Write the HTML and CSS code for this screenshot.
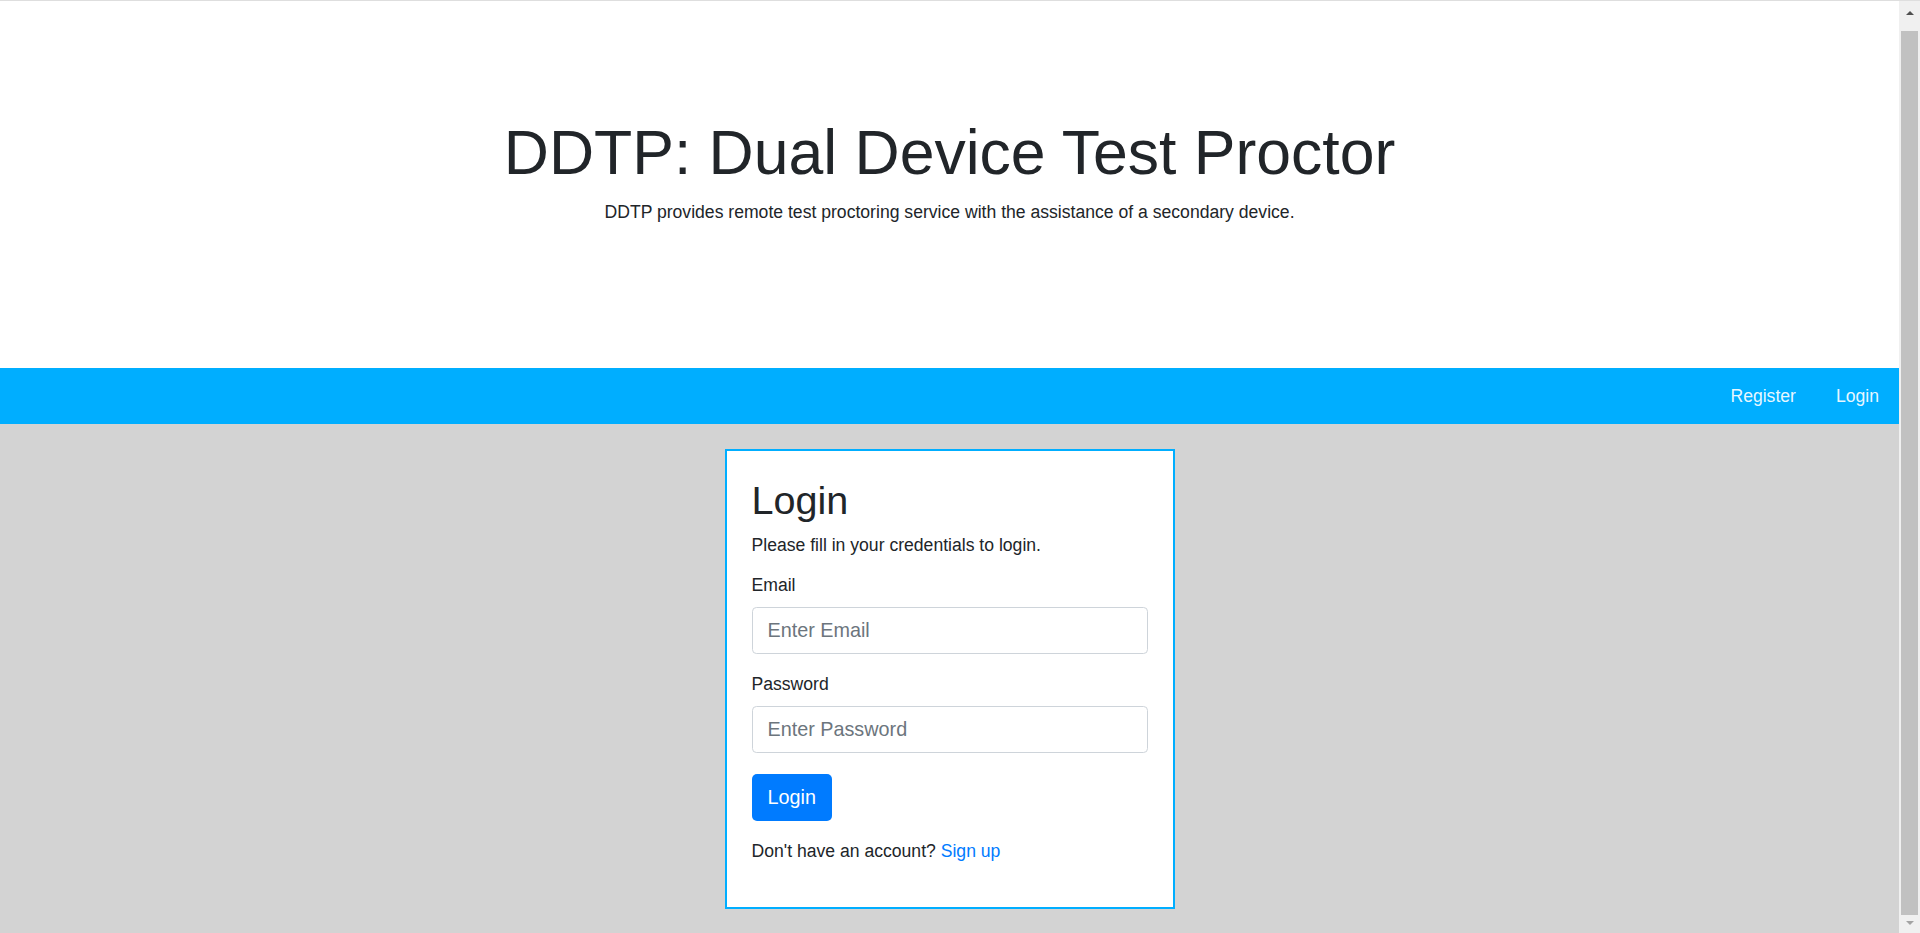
FILE: index.html
```html
<!DOCTYPE html>
<html lang="en">
<head>
  <meta charset="UTF-8">
  <meta name="viewport" content="width=device-width, initial-scale=1.0">
  <title>DDTP: Dual Device Test Proctor</title>
  <link rel="stylesheet" href="styles.css">
</head>
<body>
  <div class="window">
    <div class="viewport">
      <header class="jumbotron">
        <h1 class="display-title">DDTP: Dual Device Test Proctor</h1>
        <p class="lead-text">DDTP provides remote test proctoring service with the assistance of a secondary device.</p>
      </header>

      <nav class="navbar">
        <a class="nav-link" href="#">Register</a>
        <a class="nav-link" href="#">Login</a>
      </nav>

      <main class="page">
        <div class="login-box">
          <h2>Login</h2>
          <p class="intro">Please fill in your credentials to login.</p>
          <form>
            <div class="form-group">
              <label for="email">Email</label>
              <input type="text" id="email" class="form-control" placeholder="Enter Email">
            </div>
            <div class="form-group">
              <label for="password">Password</label>
              <input type="password" id="password" class="form-control" placeholder="Enter Password">
            </div>
            <div class="form-group submit">
              <button type="submit" class="btn">Login</button>
            </div>
            <p class="signup">Don't have an account? <a href="#">Sign up</a></p>
          </form>
        </div>
      </main>
    </div>

    <div class="scrollbar">
      <span class="arrow up"></span>
      <div class="thumb"></div>
      <span class="arrow down"></span>
    </div>
  </div>
</body>
</html>
```

FILE: styles.css
```css
body {
  font-family: 'Liberation Sans', Arial, sans-serif;
  font-size: 17.6px;
  line-height: 1.5;
  color: #212529;
  margin: 0;
}

.window {
  display: flex;
  height: 100vh;
  box-sizing: border-box;
  border-top: 1px solid #dedede;
  overflow: hidden;
}

.viewport {
  flex: 1;
  min-width: 0;
  background-color: #d3d3d3;
  overflow: hidden;
}

/* fake browser scrollbar */
.scrollbar {
  width: 21px;
  background-color: #f0f0f0;
  display: flex;
  flex-direction: column;
  align-items: center;
}

.arrow {
  width: 0;
  height: 0;
  border-left: 4.5px solid transparent;
  border-right: 4.5px solid transparent;
}

.arrow.up {
  margin-top: 10px;
  border-bottom: 4.5px solid #505050;
}

.thumb {
  flex: 1;
  width: 17px;
  margin: 16px 0 6px;
  background-color: #c1c1c1;
}

.arrow.down {
  margin-bottom: 8px;
  border-top: 4.5px solid #a3a3a3;
}

.jumbotron {
  background-color: #fff;
  box-sizing: border-box;
  height: 367px;
  padding-bottom: 11px;
  display: flex;
  flex-direction: column;
  justify-content: center;
  align-items: center;
  text-align: center;
}

.display-title {
  font-size: 62.5px;
  font-weight: 300;
  line-height: 1.2;
  margin: 0 0 8.8px;
}

.lead-text {
  margin: 0 0 17.6px;
}

.navbar {
  background-color: #00aeff;
  height: 56px;
  display: flex;
  justify-content: flex-end;
  align-items: center;
  gap: 40px;
  padding-right: 20px;
}

.nav-link {
  color: rgba(255, 255, 255, 0.92);
  text-decoration: none;
}

.page {
  padding: 25px 0;
  display: flex;
  justify-content: center;
}

.login-box {
  width: 396px;
  background-color: #fff;
  border: 2px solid #00aeff;
  padding: 26px 25px 25px;
}

.login-box h2 {
  font-size: 39.6px;
  font-weight: 500;
  line-height: 1.2;
  margin: 0 0 7px;
}

.intro {
  margin: 0 0 14px;
}

.form-group {
  margin-bottom: 17.6px;
}

.form-group.submit {
  margin-top: 21px;
  margin-bottom: 17px;
}

label {
  display: block;
  margin-bottom: 8.5px;
}

.form-control {
  display: block;
  box-sizing: border-box;
  width: 100%;
  height: 47px;
  padding: 0 15px;
  font-family: inherit;
  font-size: 19.8px;
  color: #495057;
  border: 1px solid #ced4da;
  border-radius: 4.4px;
}

.form-control::placeholder {
  color: #6c757d;
}

.btn {
  height: 47px;
  padding: 0 16px;
  font-family: inherit;
  font-size: 19.8px;
  color: #fff;
  background-color: #007bff;
  border: none;
  border-radius: 5px;
  cursor: pointer;
}

.signup {
  margin: 0 0 17.6px;
}

.signup a {
  color: #007bff;
  text-decoration: none;
}
```
